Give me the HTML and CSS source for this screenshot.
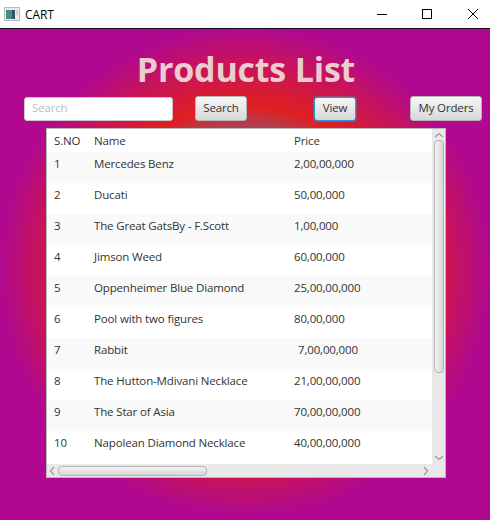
FILE: index.html
```html
<!DOCTYPE html>
<html lang="en">
<head>
    <meta charset="UTF-8">
    <title>CART</title>
    <link rel="stylesheet" href="styles.css">
</head>
<body>
    <div class="titlebar">
        <svg class="app-icon" width="16" height="16" viewBox="0 0 16 16">
            <rect x="0.5" y="1.5" width="15" height="13" fill="#e8ecec" stroke="#b4bcc0"/>
            <rect x="2" y="4" width="6" height="9" fill="#4f8a86"/>
            <rect x="8" y="4" width="3" height="9" fill="#2f5668"/>
            <rect x="12" y="4" width="2" height="5" fill="#c4d8d8"/>
        </svg>
        <span class="app-title">CART</span>
        <div class="win-buttons">
            <svg width="10" height="10" viewBox="0 0 10 10"><path d="M0 5.5H10" stroke="#000" fill="none"/></svg>
            <svg width="10" height="10" viewBox="0 0 10 10"><rect x="0.5" y="0.5" width="9" height="9" stroke="#000" fill="none"/></svg>
            <svg width="12" height="12" viewBox="0 0 12 12"><path d="M1 1L11 11M11 1L1 11" stroke="#000" fill="none"/></svg>
        </div>
    </div>

    <div class="scene">
        <h1>Products List</h1>

        <div class="toolbar">
            <input class="search" type="text" placeholder="Search">
            <button class="btn btn-search">Search</button>
            <button class="btn btn-view">View</button>
            <button class="btn btn-orders">My Orders</button>
        </div>

        <div class="table-box">
            <div class="table-main">
                <div class="table-view">
                    <table>
                        <thead>
                            <tr><th class="col-no">S.NO</th><th class="col-name">Name</th><th>Price</th></tr>
                        </thead>
                        <tbody>
                            <tr><td>1</td><td>Mercedes Benz</td><td>2,00,00,000</td></tr>
                            <tr><td>2</td><td>Ducati</td><td>50,00,000</td></tr>
                            <tr><td>3</td><td>The Great GatsBy - F.Scott</td><td>1,00,000</td></tr>
                            <tr><td>4</td><td>Jimson Weed</td><td>60,00,000</td></tr>
                            <tr><td>5</td><td>Oppenheimer Blue Diamond</td><td>25,00,00,000</td></tr>
                            <tr><td>6</td><td>Pool with two figures</td><td>80,00,000</td></tr>
                            <tr><td>7</td><td>Rabbit</td><td class="indent">7,00,00,000</td></tr>
                            <tr><td>8</td><td>The Hutton-Mdivani Necklace</td><td>21,00,00,000</td></tr>
                            <tr><td>9</td><td>The Star of Asia</td><td>70,00,00,000</td></tr>
                            <tr><td>10</td><td>Napolean Diamond Necklace</td><td>40,00,00,000</td></tr>
                        </tbody>
                    </table>
                </div>
                <div class="scroll-v">
                    <svg width="10" height="6" viewBox="0 0 10 6"><path d="M1 5L5 1.5L9 5" stroke="#9a9a9a" stroke-width="1.2" fill="none"/></svg>
                    <div class="thumb-v"></div>
                    <svg width="10" height="6" viewBox="0 0 10 6"><path d="M1 1L5 4.5L9 1" stroke="#9a9a9a" stroke-width="1.2" fill="none"/></svg>
                </div>
            </div>
            <div class="scroll-h">
                <svg width="6" height="10" viewBox="0 0 6 10"><path d="M5 1L1.5 5L5 9" stroke="#9a9a9a" stroke-width="1.2" fill="none"/></svg>
                <div class="track-h"><div class="thumb-h"></div></div>
                <svg width="6" height="10" viewBox="0 0 6 10"><path d="M1 1L4.5 5L1 9" stroke="#9a9a9a" stroke-width="1.2" fill="none"/></svg>
                <div class="corner"></div>
            </div>
        </div>
    </div>
</body>
</html>
```

FILE: styles.css
```css
* {
    box-sizing: border-box;
}

body {
    margin: 0;
    width: 490px;
    height: 520px;
    overflow: hidden;
    font-family: "Open Sans", "Noto Sans", sans-serif;
    color: #333;
}

.titlebar {
    display: flex;
    align-items: center;
    height: 29px;
    padding-left: 4px;
    background: #fff;
    border-bottom: 1px solid #1a0a18;
}

.app-icon {
    margin-right: 5px;
}

.app-title {
    font-size: 12px;
    letter-spacing: -0.1px;
    color: #000;
}

.win-buttons {
    display: flex;
    align-items: center;
    gap: 35px;
    margin-left: auto;
    padding-right: 11px;
}

.scene {
    height: 491px;
    padding-top: 18px;
    background: radial-gradient(circle 245px at 245px 242px, #a04a60 140px, #e01f20 165px, #b0098f 100%);
}

h1 {
    margin: 0;
    height: 44px;
    padding-left: 2px;
    text-align: center;
    font-size: 34px;
    line-height: 44px;
    font-weight: 700;
    letter-spacing: -0.2px;
    color: #eccccf;
}

.toolbar {
    display: flex;
    align-items: center;
    margin-top: 5px;
    padding-left: 24px;
    height: 25px;
}

.search {
    width: 149px;
    height: 24px;
    padding: 0 7px 2px;
    font: 11.5px "Open Sans", sans-serif;
    letter-spacing: -0.15px;
    background: #fff;
    border: 1px solid #c8c8c8;
    border-radius: 3px;
    outline: none;
}

.search::placeholder {
    color: #bbb;
}

.btn {
    height: 25px;
    padding: 0 0 2px;
    font: 11.5px "Open Sans", sans-serif;
    letter-spacing: -0.15px;
    color: #333;
    background: linear-gradient(#f6f6f6, #d8d8d8);
    border: 1px solid #b5b5b5;
    border-radius: 3px;
}

.btn-search {
    width: 52px;
    margin-left: 22px;
}

.btn-view {
    width: 42px;
    height: 24px;
    margin-left: 67px;
    border: 1px solid #2a9bd0;
    box-shadow: 0 0 1px 1px rgba(42, 155, 208, 0.45);
}

.btn-orders {
    width: 72px;
    margin-left: 54px;
}

.table-box {
    width: 400px;
    margin: 7px 0 0 46px;
    background: #e9e9e9;
    border: 1px solid #b8b8b8;
}

.table-main {
    display: flex;
    height: 335px;
}

.table-view {
    flex: 1;
    overflow: hidden;
    background: #fff;
}

table {
    width: 100%;
    border-collapse: collapse;
    table-layout: fixed;
    font-size: 11.5px;
    letter-spacing: -0.15px;
}

th, td {
    padding: 0 0 0 7px;
    text-align: left;
    font-weight: 400;
    white-space: nowrap;
}

th {
    height: 23px;
}

td {
    height: 31px;
    padding-bottom: 9px;
}

.col-no {
    width: 40px;
}

.col-name {
    width: 200px;
}

tbody tr:nth-child(odd) {
    background: #f9f9f9;
}

.indent {
    padding-left: 11px;
}

.scroll-v {
    display: flex;
    flex-direction: column;
    align-items: center;
    justify-content: space-between;
    width: 13px;
    padding: 3px 0 3px;
    background: #e9e9e9;
}

.thumb-v {
    width: 10px;
    height: 233px;
    margin: 2px 0 auto;
    background: linear-gradient(to right, #f2f2f2, #d6d6d6);
    border: 1px solid #b5b5b5;
    border-radius: 4px;
}

.scroll-h {
    display: flex;
    align-items: center;
    height: 13px;
    padding-left: 2px;
    background: #e9e9e9;
}

.track-h {
    flex: 1;
    padding-left: 3px;
}

.thumb-h {
    width: 149px;
    height: 10px;
    background: linear-gradient(#f2f2f2, #d6d6d6);
    border: 1px solid #b5b5b5;
    border-radius: 4px;
}

.corner {
    width: 16px;
}
```
